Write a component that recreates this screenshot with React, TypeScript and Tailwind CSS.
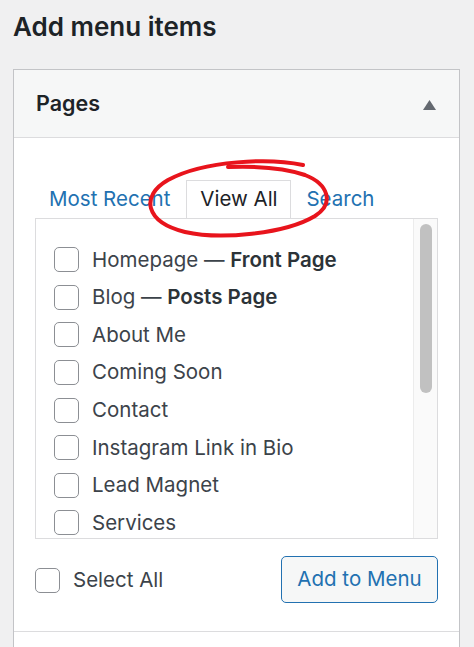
import React from 'react';

type PageItem = { name: string; note?: string };

const PAGES: PageItem[] = [
  { name: 'Homepage', note: 'Front Page' },
  { name: 'Blog', note: 'Posts Page' },
  { name: 'About Me' },
  { name: 'Coming Soon' },
  { name: 'Contact' },
  { name: 'Instagram Link in Bio' },
  { name: 'Lead Magnet' },
  { name: 'Services' },
  { name: 'Shop' },
  { name: 'Thank You' },
];

function Checkbox() {
  return <span className="block h-[25px] w-[25px] shrink-0 rounded-[5px] border-[1.5px] border-[#8c8f94] bg-white" />;
}

export default function App() {
  return (
    <div className="min-h-[647px] overflow-hidden bg-[#f0f0f1] font-['Inter',sans-serif] text-[#3c434a]">
      <h2 className="h-[69px] pl-[13px] pt-[11px] text-[26px] font-semibold leading-[32px] text-[#1d2327]">
        Add menu items
      </h2>

      <div className="ml-[13px] w-[447px] border border-[#c3c4c7] bg-white">
        <div className="flex h-[68px] items-center justify-between border-b border-[#dcdcde] bg-[#f6f7f7] pl-[22px] pr-[23px]">
          <h3 className="text-[21.5px] font-semibold leading-none text-[#1d2327]">Pages</h3>
          <svg width="13" height="10" viewBox="0 0 13 10" className="mt-[2px]">
            <path d="M6.5 0 L13 10 L0 10 Z" fill="#646970" />
          </svg>
        </div>

        <div className="relative px-[21px] pb-[28px] pt-[42px]">
          {/* tabs */}
          <div className="flex h-[38px] items-stretch pl-[14px] text-[20.5px] leading-none">
            <span className="flex items-center pr-[16px] text-[#2271b1]">Most Recent</span>
            <span className="flex w-[105px] items-center justify-center border-x border-t border-[#dcdcde] bg-white text-[#1d2327]">
              View All
            </span>
            <span className="flex items-center pl-[15px] text-[#2271b1]">Search</span>
          </div>

          {/* list */}
          <div className="flex h-[321px] border border-[#dcdcde] bg-white">
            <ul className="flex-1 overflow-hidden pl-[18px] pt-[22px]">
              {PAGES.map((p) => (
                <li key={p.name} className="flex h-[37.6px] items-center gap-[13px] text-[20.5px] leading-none">
                  <Checkbox />
                  <span className="whitespace-nowrap">
                    {p.name}
                    {p.note && (
                      <>
                        {' — '}
                        <strong className="font-semibold text-[#2c3338]">{p.note}</strong>
                      </>
                    )}
                  </span>
                </li>
              ))}
            </ul>
            <div className="w-[24px] shrink-0 border-l border-[#ececec] bg-[#fafafa] pl-[6px] pt-[5px]">
              <div className="h-[169px] w-[12px] rounded-full bg-[#c1c1c1]" />
            </div>
          </div>

          {/* footer */}
          <div className="mt-[17px] flex items-center justify-between">
            <label className="flex items-center gap-[13px] pt-[2px] text-[20.5px] leading-none">
              <Checkbox />
              Select All
            </label>
            <button className="h-[47px] w-[157px] rounded-[5px] border border-[#2271b1] bg-[#f6f7f7] text-[20.5px] leading-none text-[#2271b1]">
              Add to Menu
            </button>
          </div>

          {/* hand-drawn highlight */}
          <svg
            className="pointer-events-none absolute left-[116px] top-[18px]"
            width="210"
            height="90"
            viewBox="130 156 210 90"
          >
            <path
              d="M303 165 C 270 158, 205 160, 168 180 C 140 196, 145 222, 185 232 C 220 240, 285 234, 315 216 C 335 203, 328 184, 305 175 C 285 168, 255 166, 228 167"
              fill="none"
              stroke="#e8141c"
              strokeWidth="4"
              strokeLinecap="round"
            />
          </svg>
        </div>

        <div className="h-[40px] border-t border-[#dcdcde] bg-white" />
      </div>
    </div>
  );
}
